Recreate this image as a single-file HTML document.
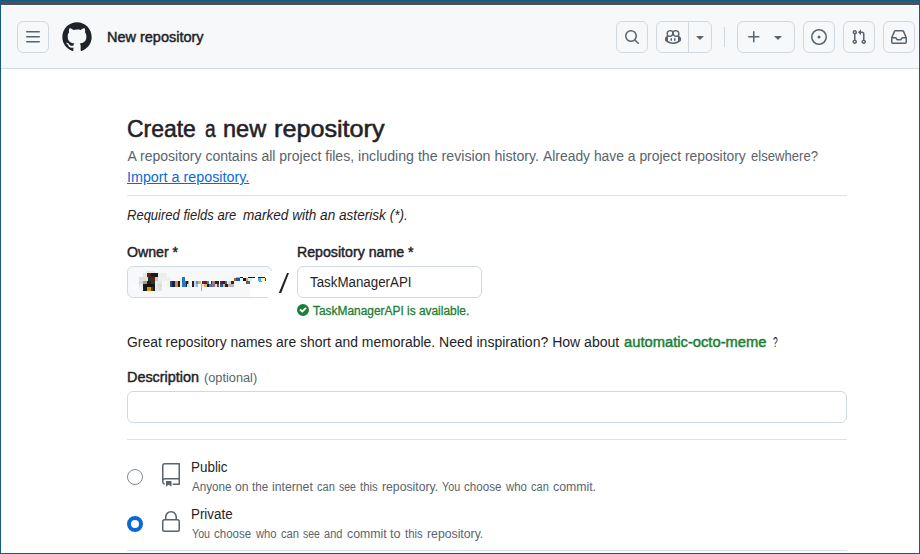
<!DOCTYPE html>
<html>
<head>
<meta charset="utf-8">
<title>New repository</title>
<style>
*{box-sizing:border-box;margin:0;padding:0}
html,body{width:920px;height:554px;overflow:hidden;background:#fff}
body{font-family:"Liberation Sans",sans-serif;color:#1f2328;position:relative;font-size:14px}
.abs{position:absolute}
#frame{position:absolute;left:0;top:0;width:920px;height:554px;border:1px solid #125d86;z-index:50;pointer-events:none}
#topbar{position:absolute;left:1px;top:1px;width:918px;height:4px;background:#47545c;z-index:40}
#header{position:absolute;left:2px;top:6px;width:916px;height:62px;background:#f6f8fa}
#hline{position:absolute;left:1px;top:68px;width:918px;height:1px;background:#d1d9e0}
.hbtn{position:absolute;top:21px;height:32px;width:32px;border:1px solid #d1d9e0;border-radius:6px;background:#f6f8fa}
.hbtn svg{position:absolute;left:7px;top:7px;width:16px;height:16px;fill:#59636e}
.t{position:absolute;white-space:nowrap;line-height:1;transform-origin:0 50%}
.hr{position:absolute;left:127px;width:720px;height:1px;background:#dde2e7}
.inp{position:absolute;border:1px solid #d1d9e0;border-radius:6px;background:#fff}
</style>
</head>
<body>
<div id="frame"></div>
<div id="topbar"></div>
<div id="header"></div>
<div id="hline"></div>

<!-- header left -->
<div class="hbtn" style="left:17px">
<svg viewBox="0 0 16 16"><path d="M1 2.75A.75.75 0 0 1 1.750 2h12.500a.75.750 0 0 1 0 1.500H1.750A.750.750 0 0 1 1 2.750Zm0 5A.750.750 0 0 1 1.750 7h12.500a.750.750 0 0 1 0 1.500H1.750A.750.750 0 0 1 1 7.750ZM1.750 12h12.500a.750.750 0 0 1 0 1.500H1.750a.750.750 0 0 1 0-1.500Z"/></svg>
</div>
<svg class="abs" style="left:61px;top:21px" width="32" height="32" viewBox="0 0 24 24" fill="#1f2328"><path d="M12 1C5.923 1 1 5.923 1 12c0 4.867 3.149 8.979 7.521 10.436.55.096.756-.233.756-.522 0-.262-.013-1.128-.013-2.049-2.764.509-3.479-.674-3.699-1.292-.124-.317-.66-1.293-1.127-1.554-.385-.207-.936-.715-.014-.729.866-.014 1.485.797 1.691 1.128.99 1.663 2.571 1.196 3.204.907.096-.715.385-1.196.701-1.471-2.448-.275-5.005-1.224-5.005-5.432 0-1.196.426-2.186 1.128-2.956-.111-.275-.496-1.402.11-2.915 0 0 .921-.288 3.024 1.128a10.193 10.193 0 0 1 2.750-.371c.936 0 1.871.123 2.750.371 2.104-1.430 3.025-1.128 3.025-1.128.605 1.513.221 2.640.111 2.915.701.770 1.127 1.747 1.127 2.956 0 4.222-2.571 5.157-5.019 5.432.399.344.743 1.004.743 2.035 0 1.471-.014 2.654-.014 3.025 0 .289.206.632.756.522C19.851 20.979 23 16.854 23 12c0-6.077-4.922-11-11-11Z"/></svg>


<!-- header right -->
<div class="hbtn" style="left:616px"><svg viewBox="0 0 16 16"><path d="M10.68 11.74a6 6 0 0 1-7.922-8.982 6 6 0 0 1 8.982 7.922l3.040 3.040a.749.749 0 0 1-.326 1.275.749.749 0 0 1-.734-.215ZM11.500 7a4.499 4.499 0 1 0-8.997 0A4.499 4.499 0 0 0 11.500 7Z"/></svg></div>
<div class="hbtn" style="left:656px;width:56px"><svg viewBox="0 0 16 16" style="left:8px"><path d="M7.998 15.035c-4.562 0-7.873-2.914-7.998-3.749V9.338c.085-.628.677-1.686 1.588-2.065.013-.07.024-.143.036-.218.029-.183.06-.384.126-.612-.201-.508-.254-1.084-.254-1.656 0-.87.128-1.769.693-2.484.579-.733 1.494-1.124 2.724-1.261 1.206-.134 2.262.034 2.944.765.05.053.096.108.139.165.044-.057.094-.112.143-.165.682-.731 1.738-.899 2.944-.765 1.23.137 2.145.528 2.724 1.261.566.715.693 1.614.693 2.484 0 .572-.053 1.148-.254 1.656.066.228.098.429.126.612.012.076.024.148.037.218.924.385 1.522 1.471 1.591 2.095v1.872c0 .766-3.351 3.795-8.002 3.795Zm0-1.485c2.28 0 4.584-1.11 5.002-1.433V7.862l-.023-.116c-.49.21-1.075.291-1.727.291-1.146 0-2.059-.327-2.71-.991A3.222 3.222 0 0 1 8 6.303a3.24 3.240 0 0 1-.544.743c-.65.664-1.563.991-2.71.991-.652 0-1.236-.081-1.727-.291l-.023.116v4.255c.419.323 2.722 1.433 5.002 1.433ZM6.762 2.83c-.193-.206-.637-.413-1.682-.297-1.019.113-1.479.404-1.713.7-.247.312-.369.789-.369 1.554 0 .793.129 1.171.308 1.371.162.181.519.379 1.442.379.853 0 1.339-.235 1.638-.54.315-.322.527-.827.617-1.553.117-.935-.037-1.395-.241-1.614Zm4.155-.297c-1.044-.116-1.488.091-1.681.297-.204.219-.359.679-.242 1.614.091.726.303 1.231.618 1.553.299.305.784.54 1.638.54.922 0 1.28-.198 1.442-.379.179-.2.308-.578.308-1.371 0-.765-.123-1.242-.37-1.554-.233-.296-.693-.587-1.713-.7Z"/><path d="M6.250 9.037a.75.75 0 0 1 .75.75v1.501a.75.75 0 0 1-1.500 0V9.787a.75.75 0 0 1 .75-.75Zm4.250.75v1.501a.75.75 0 0 1-1.500 0V9.787a.75.75 0 0 1 1.500 0Z"/></svg>
<div style="position:absolute;left:31px;top:-1px;width:1px;height:32px;background:#d1d9e0"></div>
<svg viewBox="0 0 16 16" style="left:35px"><path d="m4.427 7.427 3.396 3.396a.25.25 0 0 0 .354 0l3.396-3.396A.25.25 0 0 0 11.396 7H4.604a.25.25 0 0 0-.177.427Z"/></svg></div>
<div class="abs" style="left:724px;top:27px;width:1px;height:20px;background:#d1d9e0"></div>
<div class="hbtn" style="left:737px;width:58px"><svg viewBox="0 0 16 16" style="left:8px"><path d="M7.75 2a.75.75 0 0 1 .75.75V7h4.250a.75.75 0 0 1 0 1.500H8.500v4.250a.75.75 0 0 1-1.500 0V8.500H2.750a.75.75 0 0 1 0-1.500H7V2.750A.75.75 0 0 1 7.750 2Z"/></svg><svg viewBox="0 0 16 16" style="left:32px"><path d="m4.427 7.427 3.396 3.396a.25.25 0 0 0 .354 0l3.396-3.396A.25.25 0 0 0 11.396 7H4.604a.25.25 0 0 0-.177.427Z"/></svg></div>
<div class="hbtn" style="left:803px"><svg viewBox="0 0 16 16"><path d="M8 9.500a1.500 1.500 0 1 0 0-3 1.500 1.500 0 0 0 0 3Z"/><path d="M8 0a8 8 0 1 1 0 16A8 8 0 0 1 8 0ZM1.500 8a6.500 6.500 0 1 0 13 0 6.500 6.500 0 0 0-13 0Z"/></svg></div>
<div class="hbtn" style="left:843px"><svg viewBox="0 0 16 16"><path d="M1.500 3.250a2.250 2.250 0 1 1 3 2.122v5.256a2.251 2.251 0 1 1-1.500 0V5.372A2.250 2.250 0 0 1 1.500 3.250Zm5.677-.177L9.573.677A.25.25 0 0 1 10 .854V2.500h1A2.500 2.500 0 0 1 13.500 5v5.628a2.251 2.251 0 1 1-1.500 0V5a1 1 0 0 0-1-1h-1v1.646a.25.25 0 0 1-.427.177L7.177 3.427a.25.25 0 0 1 0-.354ZM3.750 2.500a.75.75 0 1 0 0 1.500.75.75 0 0 0 0-1.500Zm0 9.500a.75.75 0 1 0 0 1.500.75.75 0 0 0 0-1.500Zm8.250.75a.75.75 0 1 0 1.500 0 .75.75 0 0 0-1.500 0Z"/></svg></div>
<div class="hbtn" style="left:883px"><svg viewBox="0 0 16 16"><path d="M2.800 2.060A1.750 1.750 0 0 1 4.410 1h7.180c.7 0 1.333.417 1.610 1.060l2.740 6.395c.04.093.06.194.06.295v4.500A1.750 1.750 0 0 1 14.250 15H1.750A1.750 1.750 0 0 1 0 13.250v-4.500c0-.101.020-.202.060-.295Zm1.610.44a.25.25 0 0 0-.23.152L1.887 8H4.750a.75.75 0 0 1 .6.3L6.625 10h2.750l1.275-1.700a.75.75 0 0 1 .6-.3h2.863L11.820 2.652a.25.25 0 0 0-.23-.152Zm10.090 7h-2.875l-1.275 1.700a.75.75 0 0 1-.6.3h-3.500a.75.75 0 0 1-.6-.3L4.375 9.500H1.500v3.750c0 .138.112.25.25.25h12.500a.25.25 0 0 0 .25-.25Z"/></svg></div>

<!-- main -->
<div class="hr" style="top:195px"></div>

<div class="inp" id="ownerbtn" style="left:127px;top:266px;width:145px;height:32px;background:#f6f8fa"></div>
<div class="inp" id="nameinp" style="left:297px;top:266px;width:185px;height:32px"></div>


<div class="inp" id="descinp" style="left:127px;top:391px;width:720px;height:32px"></div>
<div class="hr" style="top:439px"></div>

<div class="hr" style="top:550px"></div>

<!-- check icon -->
<svg class="abs" style="left:297px;top:304px" width="12" height="12" viewBox="0 0 12 12" fill="#1a7f37"><path d="M6 0a6 6 0 1 1 0 12A6 6 0 0 1 6 0Zm-.705 8.737L9.630 4.403 8.392 3.166 5.295 6.263l-1.700-1.538L2.370 5.962l2.925 2.775Z"/></svg>
<!-- radios -->
<div class="abs" style="left:127px;top:469px;width:16px;height:16px;border:1px solid #818b98;border-radius:50%;background:#fff"></div>
<div class="abs" style="left:127px;top:516px;width:16px;height:16px;border:4px solid #0969da;border-radius:50%;background:#fff"></div>
<svg class="abs" style="left:159px;top:463px" width="24" height="24" viewBox="0 0 24 24" fill="#59636e"><path d="M3 2.750A2.750 2.750 0 0 1 5.750 0h14.500a.75.75 0 0 1 .75.75v20.500a.75.75 0 0 1-.75.75h-6a.75.75 0 0 1 0-1.500h5.250v-4H6A1.500 1.500 0 0 0 4.500 18v.75c0 .716.43 1.334 1.050 1.605a.75.75 0 0 1-.6 1.374A3.251 3.251 0 0 1 3 18.750ZM19.500 1.500H5.750c-.69 0-1.250.56-1.250 1.250v12.651A2.989 2.989 0 0 1 6 15h13.500Z"/><path d="M7 18.250a.25.25 0 0 1 .25-.25h5a.25.25 0 0 1 .25.25v5.010a.25.25 0 0 1-.397.201l-2.206-1.604a.25.25 0 0 0-.294 0L7.397 23.460a.25.25 0 0 1-.397-.2Z"/></svg>
<svg class="abs" style="left:159px;top:510px" width="24" height="24" viewBox="0 0 24 24" fill="#59636e"><path d="M6 9V7.250C6 3.845 8.503 1 12 1s6 2.845 6 6.250V9h.5a2.500 2.500 0 0 1 2.500 2.500v8a2.500 2.500 0 0 1-2.500 2.500h-13A2.500 2.500 0 0 1 3 19.500v-8A2.500 2.500 0 0 1 5.500 9Zm-1.500 2.500v8a1 1 0 0 0 1 1h13a1 1 0 0 0 1-1v-8a1 1 0 0 0-1-1h-13a1 1 0 0 0-1 1Zm3-4.250V9h9V7.250c0-2.670-1.922-4.750-4.500-4.750-2.578 0-4.500 2.080-4.500 4.750Z"/></svg>
<!--MOSAIC-->
<svg class="abs" style="left:0;top:0" width="920" height="554" shape-rendering="crispEdges">
<rect x="250" y="288" width="22" height="9" fill="#fff"/>
<rect x="265" y="271" width="8" height="26" fill="#fff"/>
<rect x="252" y="277" width="6" height="7" fill="#fff"/>
<rect x="260" y="282" width="5" height="6" fill="#fff"/>
<rect x="143" y="273" width="4" height="4" fill="#e4e8e8"/>
<rect x="147" y="273" width="4" height="4" fill="#5a1f17"/>
<rect x="151" y="273" width="7" height="4" fill="#1a1a1c"/>
<rect x="158" y="273" width="9" height="4" fill="#eceeea"/>
<rect x="146" y="271" width="9" height="2" fill="#e9e6e4"/>
<rect x="139" y="277" width="4" height="4" fill="#dfe1e6"/>
<rect x="143" y="277" width="5" height="4" fill="#e9e2cf"/>
<rect x="148" y="277" width="3" height="4" fill="#24302c"/>
<rect x="151" y="277" width="4" height="4" fill="#5c2015"/>
<rect x="155" y="277" width="3" height="4" fill="#cfc6b8"/>
<rect x="158" y="277" width="12" height="4" fill="#eef0ee"/>
<rect x="139" y="281" width="4" height="3" fill="#d5d7de"/>
<rect x="143" y="281" width="4" height="3" fill="#a59a8a"/>
<rect x="147" y="281" width="4" height="3" fill="#2a1a18"/>
<rect x="151" y="281" width="4" height="3" fill="#1f3a3a"/>
<rect x="155" y="281" width="2" height="3" fill="#d5f5ee"/>
<rect x="157" y="281" width="5" height="3" fill="#e6e9e6"/>
<rect x="139" y="284" width="4" height="3" fill="#e6e8ee"/>
<rect x="143" y="284" width="4" height="3" fill="#0f1a26"/>
<rect x="147" y="284" width="5" height="3" fill="#1a1208"/>
<rect x="152" y="284" width="3" height="3" fill="#111820"/>
<rect x="155" y="284" width="3" height="3" fill="#e8eaea"/>
<rect x="158" y="284" width="4" height="3" fill="#dcdde0"/>
<rect x="139" y="287" width="4" height="4" fill="#eef0f4"/>
<rect x="143" y="287" width="4" height="4" fill="#101a22"/>
<rect x="147" y="287" width="4" height="4" fill="#c9980c"/>
<rect x="151" y="287" width="2" height="4" fill="#6a3010"/>
<rect x="153" y="287" width="2" height="4" fill="#0f2418"/>
<rect x="155" y="287" width="3" height="4" fill="#ece6ee"/>
<rect x="158" y="287" width="4" height="4" fill="#e2e4e4"/>
<rect x="131" y="284" width="8" height="6" fill="#fafbfc"/>
<rect x="167" y="281" width="3" height="6" fill="#fbf6c0"/>
<rect x="170" y="281" width="2" height="6" fill="#1f4f9e"/>
<rect x="172" y="281" width="3" height="6" fill="#15204a"/>
<rect x="175" y="281" width="3" height="6" fill="#d98e3c"/>
<rect x="178" y="281" width="2" height="6" fill="#151a38"/>
<rect x="180" y="277" width="2" height="10" fill="#f5f5c8"/>
<rect x="182" y="277" width="3" height="4" fill="#2173c9"/>
<rect x="182" y="281" width="4" height="6" fill="#2a78cc"/>
<rect x="186" y="281" width="2" height="6" fill="#181c3a"/>
<rect x="188" y="281" width="1" height="3" fill="#e09a40"/>
<rect x="187" y="284" width="3" height="3" fill="#bff2fa"/>
<rect x="190" y="284" width="2" height="3" fill="#e6fbfb"/>
<rect x="192" y="281" width="2" height="6" fill="#4a1612"/>
<rect x="194" y="281" width="2" height="6" fill="#b8dcf2"/>
<rect x="196" y="281" width="2" height="3" fill="#4a9ae8"/>
<rect x="198" y="281" width="3" height="3" fill="#eead58"/>
<rect x="202" y="281" width="5" height="3" fill="#6a1c20"/>
<rect x="207" y="281" width="2" height="3" fill="#2f7fd8"/>
<rect x="211" y="281" width="1" height="3" fill="#6a1c20"/>
<rect x="212" y="281" width="3" height="3" fill="#c87a28"/>
<rect x="215" y="281" width="4" height="3" fill="#1a2430"/>
<rect x="220" y="281" width="3" height="3" fill="#5a2a22"/>
<rect x="223" y="281" width="2" height="3" fill="#1c2228"/>
<rect x="225" y="281" width="2" height="3" fill="#2a6fc8"/>
<rect x="228" y="281" width="3" height="3" fill="#f5d29a"/>
<rect x="231" y="281" width="3" height="3" fill="#4a1a20"/>
<rect x="196" y="284" width="2" height="3" fill="#8ab8f5"/>
<rect x="202" y="284" width="2" height="3" fill="#c8f4f8"/>
<rect x="204" y="284" width="3" height="3" fill="#e8a85a"/>
<rect x="207" y="284" width="2" height="3" fill="#151c28"/>
<rect x="209" y="284" width="3" height="3" fill="#3a78c8"/>
<rect x="212" y="284" width="3" height="3" fill="#8a6aaa"/>
<rect x="215" y="284" width="2" height="3" fill="#e8dcc8"/>
<rect x="217" y="284" width="2" height="3" fill="#7a5028"/>
<rect x="220" y="284" width="3" height="3" fill="#2a5a9a"/>
<rect x="223" y="284" width="2" height="3" fill="#e0b878"/>
<rect x="225" y="284" width="3" height="3" fill="#3a1828"/>
<rect x="228" y="284" width="6" height="3" fill="#b0b4bc"/>
<rect x="201" y="284" width="1" height="7" fill="#e8a050"/>
<rect x="234" y="278" width="2" height="3" fill="#b8601a"/>
<rect x="236" y="278" width="4" height="3" fill="#1f4fa8"/>
<rect x="240" y="278" width="3" height="3" fill="#d8fafa"/>
<rect x="243" y="278" width="3" height="3" fill="#15181e"/>
<rect x="246" y="278" width="2" height="3" fill="#e8a050"/>
<rect x="248" y="278" width="4" height="3" fill="#c8f8f8"/>
<rect x="258" y="278" width="3" height="3" fill="#5aa8f0"/>
<rect x="261" y="278" width="4" height="3" fill="#f8f4a8"/>
<rect x="265" y="278" width="1" height="3" fill="#7a1a20"/>
<rect x="236" y="277" width="4" height="1" fill="#e8a050"/>
<rect x="240" y="277" width="3" height="1" fill="#15181e"/>
<rect x="248" y="277" width="7" height="1" fill="#15181e"/>
<rect x="258" y="277" width="7" height="1" fill="#2a2030"/>
<rect x="246" y="281" width="4" height="3" fill="#5a6270"/>
<rect x="259" y="281" width="3" height="1" fill="#8a9098"/>
</svg>
<svg class="abs" style="left:0;top:0" width="920" height="554"><polygon points="287,273 289,273 281.2,292.9 278.8,292.9" fill="#1f2328"/></svg>
<!--/MOSAIC-->
<div class="t" id="newrepo" style="left:107.25px;top:30px;font-size:14px;transform:scaleX(1.0337);-webkit-text-stroke:0.45px currentColor;">New repository</div>
<div class="t" id="t1" style="left:127.49px;top:117px;font-size:24px;transform:scaleX(0.9562);-webkit-text-stroke:0.55px currentColor;">Create</div>
<div class="t" id="t2" style="left:204.52px;top:117px;font-size:24px;transform:scaleX(0.7970);-webkit-text-stroke:0.55px currentColor;">a</div>
<div class="t" id="t3" style="left:222.70px;top:117px;font-size:24px;transform:scaleX(0.9799);-webkit-text-stroke:0.55px currentColor;">new</div>
<div class="t" id="t4" style="left:274.31px;top:117px;font-size:24px;transform:scaleX(1.0496);-webkit-text-stroke:0.55px currentColor;">repository</div>
<div class="t" id="s1" style="left:127.60px;top:149px;font-size:14px;color:#59636e;">A repository contains all project files,</div>
<div class="t" id="s2" style="left:358.11px;top:149px;font-size:14px;transform:scaleX(1.0131);color:#59636e;">including the revision history.</div>
<div class="t" id="s3" style="left:543.20px;top:149px;font-size:14px;transform:scaleX(0.9909);color:#59636e;">Already have a project repository</div>
<div class="t" id="s4" style="left:751.29px;top:149px;font-size:14px;transform:scaleX(0.9349);color:#59636e;">elsewhere?</div>
<div class="t" id="import" style="left:127.18px;top:170px;font-size:14px;transform:scaleX(1.0230);color:#0969da;text-decoration:underline;">Import a repository.</div>
<div class="t" id="req1" style="left:127.40px;top:208px;font-size:14px;transform:scaleX(0.9295);font-style:italic;">Required fields are</div>
<div class="t" id="req2" style="left:242.99px;top:208px;font-size:14px;transform:scaleX(0.9715);font-style:italic;">marked with an asterisk (*).</div>
<div class="t" id="owner" style="left:127.26px;top:245px;font-size:14px;transform:scaleX(1.0106);-webkit-text-stroke:0.45px currentColor;">Owner *</div>
<div class="t" id="rname" style="left:297.32px;top:245px;font-size:14px;transform:scaleX(1.0120);-webkit-text-stroke:0.45px currentColor;">Repository name *</div>
<div class="t" id="nameval" style="left:310.39px;top:275px;font-size:14px;transform:scaleX(0.9522);">TaskManagerAPI</div>
<div class="t" id="avail" style="left:313.30px;top:305px;font-size:12px;transform:scaleX(0.9925);color:#1a7f37;-webkit-text-stroke:0.3px currentColor;">TaskManagerAPI is available.</div>
<div class="t" id="great1" style="left:126.95px;top:335px;font-size:14px;transform:scaleX(0.9927);">Great repository names are short and memorable.</div>
<div class="t" id="great1b" style="left:438.90px;top:335px;font-size:14px;transform:scaleX(1.0026);">Need inspiration? How about</div>
<div class="t" id="great2" style="left:624.48px;top:335px;font-size:14px;transform:scaleX(1.0525);color:#1a7f37;-webkit-text-stroke:0.45px currentColor;">automatic-octo-meme</div>
<div class="t" id="great3" style="left:772.94px;top:335px;font-size:14px;transform:scaleX(0.6000);">?</div>
<div class="t" id="desc" style="left:127.31px;top:370px;font-size:14px;transform:scaleX(1.0277);-webkit-text-stroke:0.45px currentColor;">Description</div>
<div class="t" id="opt" style="left:203.66px;top:372px;font-size:12px;transform:scaleX(1.0631);color:#59636e;">(optional)</div>
<div class="t" id="public" style="left:191.35px;top:460px;font-size:14px;transform:scaleX(0.9588);">Public</div>
<div class="t" id="private" style="left:191.36px;top:507px;font-size:14px;transform:scaleX(0.9544);">Private</div>
<div class="t" id="pd0" style="left:191.50px;top:481px;font-size:12px;transform:scaleX(0.9707);color:#59636e;">Anyone</div>
<div class="t" id="pd1" style="left:235.09px;top:481px;font-size:12px;transform:scaleX(1.0187);color:#59636e;">on</div>
<div class="t" id="pd2" style="left:252.45px;top:481px;font-size:12px;transform:scaleX(0.9683);color:#59636e;">the</div>
<div class="t" id="pd3" style="left:272.18px;top:481px;font-size:12px;transform:scaleX(1.0194);color:#59636e;">internet</div>
<div class="t" id="pd4" style="left:317.34px;top:481px;font-size:12px;transform:scaleX(0.9185);color:#59636e;">can</div>
<div class="t" id="pd5" style="left:339.14px;top:481px;font-size:12px;transform:scaleX(0.8745);color:#59636e;">see</div>
<div class="t" id="pd6" style="left:360.46px;top:481px;font-size:12px;transform:scaleX(0.9490);color:#59636e;">this</div>
<div class="t" id="pd7" style="left:382.24px;top:481px;font-size:12px;transform:scaleX(1.0169);color:#59636e;">repository.</div>
<div class="t" id="pd8" style="left:441.88px;top:481px;font-size:12px;transform:scaleX(0.8946);color:#59636e;">You</div>
<div class="t" id="pd9" style="left:463.82px;top:481px;font-size:12px;transform:scaleX(0.9662);color:#59636e;">choose</div>
<div class="t" id="pd10" style="left:505.85px;top:481px;font-size:12px;transform:scaleX(0.9449);color:#59636e;">who</div>
<div class="t" id="pd11" style="left:531.04px;top:481px;font-size:12px;transform:scaleX(0.9185);color:#59636e;">can</div>
<div class="t" id="pd12" style="left:552.89px;top:481px;font-size:12px;transform:scaleX(1.0243);color:#59636e;">commit.</div>
<div class="t" id="pv0" style="left:191.68px;top:528px;font-size:12px;transform:scaleX(0.8894);color:#59636e;">You</div>
<div class="t" id="pv1" style="left:213.92px;top:528px;font-size:12px;transform:scaleX(0.9583);color:#59636e;">choose</div>
<div class="t" id="pv2" style="left:255.85px;top:528px;font-size:12px;transform:scaleX(0.9310);color:#59636e;">who</div>
<div class="t" id="pv3" style="left:280.84px;top:528px;font-size:12px;transform:scaleX(0.9295);color:#59636e;">can</div>
<div class="t" id="pv4" style="left:302.84px;top:528px;font-size:12px;transform:scaleX(0.8692);color:#59636e;">see</div>
<div class="t" id="pv5" style="left:324.04px;top:528px;font-size:12px;transform:scaleX(0.9203);color:#59636e;">and</div>
<div class="t" id="pv6" style="left:346.59px;top:528px;font-size:12px;transform:scaleX(1.0267);color:#59636e;">commit</div>
<div class="t" id="pv7" style="left:390.44px;top:528px;font-size:12px;transform:scaleX(1.0550);color:#59636e;">to</div>
<div class="t" id="pv8" style="left:405.26px;top:528px;font-size:12px;transform:scaleX(0.9490);color:#59636e;">this</div>
<div class="t" id="pv9" style="left:426.83px;top:528px;font-size:12px;transform:scaleX(1.0207);color:#59636e;">repository.</div>
</body>
</html>
